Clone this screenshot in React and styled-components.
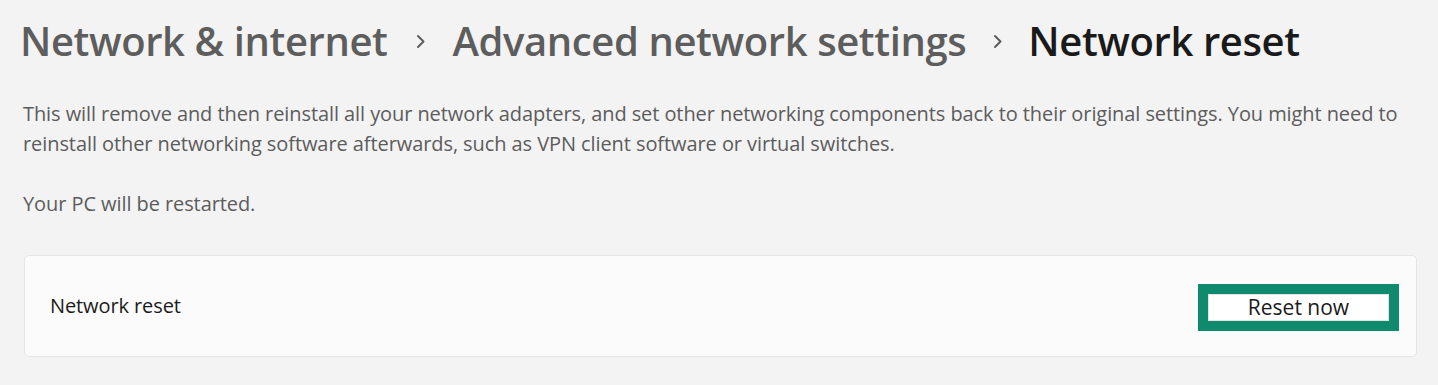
import React from "react";
import styled, { createGlobalStyle } from "styled-components";

const Global = createGlobalStyle`
  html, body { margin: 0; padding: 0; background: #f3f3f3; }
  body { font-family: "Open Sans", "Noto Sans", sans-serif; -webkit-font-smoothing: antialiased; }
`;

const Page = styled.div`
  padding: 13px 21px 0 23px;
  display: flex;
  flex-direction: column;
`;

const Breadcrumb = styled.nav`
  display: flex;
  align-items: center;
  height: 56px;
  margin-left: -3px;
`;

const Crumb = styled.span`
  font-size: 40px;
  line-height: 56px;
  font-weight: 600;
  color: ${(p) => (p.$current ? "#1a1a1a" : "#5d5d5d")};
  letter-spacing: -0.4px;
  white-space: nowrap;
`;

const Sep = styled.span`
  display: flex;
  align-items: center;
  margin: 0 ${(p) => p.$r}px 0 ${(p) => p.$l}px;
`;

const Description = styled.p`
  margin: 30px 0 0;
  font-size: 20px;
  line-height: 30px;
  letter-spacing: -0.08px;
  color: #5c5c5c;
`;

const Card = styled.section`
  margin: 36px 0 0 1px;
  height: 102px;
  box-sizing: border-box;
  background: #fbfbfb;
  border: 1px solid #e5e5e5;
  border-radius: 5px;
  display: flex;
  align-items: center;
  justify-content: space-between;
  padding: 0 17px 0 25px;
`;

const CardLabel = styled.span`
  font-size: 20px;
  line-height: 30px;
  letter-spacing: -0.1px;
  color: #1b1b1b;
`;

const Button = styled.button`
  box-sizing: border-box;
  width: 201px;
  height: 47px;
  border: 10px solid #0f8a6d;
  background: #ffffff;
  box-shadow: inset 0 0 0 1px #e2e2e2;
  border-radius: 0;
  font-family: inherit;
  font-size: 21px;
  line-height: 25px;
  color: #1b1b1b;
  padding: 0;
  margin-top: 3px;
  cursor: pointer;
`;

const Chevron = () => (
  <svg width="11" height="17" viewBox="0 0 11 17" fill="none">
    <path d="M3 3 L8.5 8.5 L3 14" stroke="#5d5d5d" strokeWidth="2" strokeLinecap="round" strokeLinejoin="round" />
  </svg>
);

export default function App() {
  return (
    <>
      <Global />
      <Page>
        <Breadcrumb>
          <Crumb>Network &amp; internet</Crumb>
          <Sep $l={27} $r={27}><Chevron /></Sep>
          <Crumb>Advanced network settings</Crumb>
          <Sep $l={26} $r={25}><Chevron /></Sep>
          <Crumb $current>Network reset</Crumb>
        </Breadcrumb>
        <Description>
          This will remove and then reinstall all your network adapters, and set other networking components back to their original settings. You might need to reinstall other networking software afterwards, such as VPN client software or virtual switches.
        </Description>
        <Description>Your PC will be restarted.</Description>
        <Card>
          <CardLabel>Network reset</CardLabel>
          <Button>Reset now</Button>
        </Card>
      </Page>
    </>
  );
}
